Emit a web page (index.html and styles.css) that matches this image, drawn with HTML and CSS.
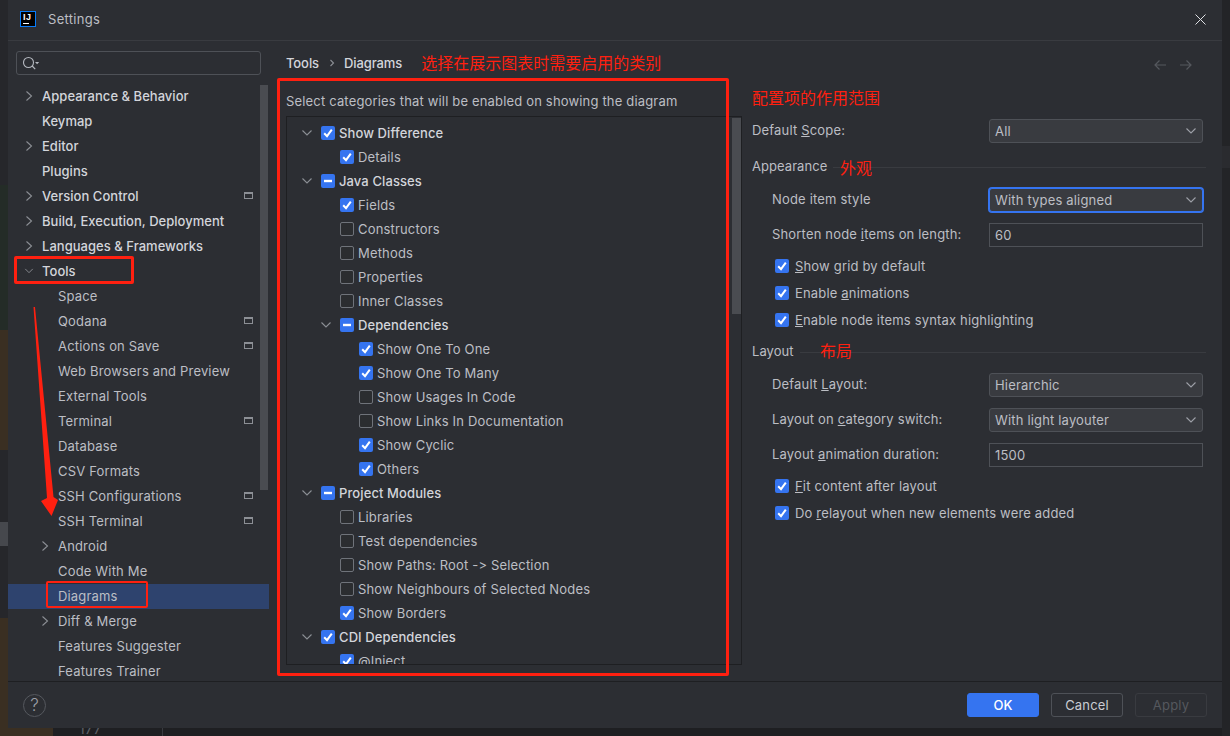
FILE: index.html
```html
<!DOCTYPE html>
<html lang="en">
<head>
<meta charset="utf-8">
<title>Settings</title>
<link rel="stylesheet" href="styles.css">
</head>
<body>
<svg class="sprite" width="0" height="0" aria-hidden="true">
  <defs>
    <symbol id="right" viewBox="0 0 10 12"><path d="M2.500 1.500 7.500 6 2.500 10.500" fill="none" stroke="currentColor" stroke-width="1.100"/></symbol>
    <symbol id="down" viewBox="0 0 12 10"><path d="M1.500 2.500 6 7 10.500 2.500" fill="none" stroke="currentColor" stroke-width="1.100"/></symbol>
    <symbol id="sep" viewBox="0 0 10 12"><path d="M3.500 3 6.500 6 3.500 9" fill="none" stroke="currentColor" stroke-width="1.100"/></symbol>
    <symbol id="check" viewBox="0 0 14 14"><path d="M3.200 7.300 6 10.200 10.800 3.600" fill="none" stroke="#fff" stroke-width="2"/></symbol>
    <symbol id="dash" viewBox="0 0 14 14"><path d="M3 7h8" fill="none" stroke="#fff" stroke-width="2.400"/></symbol>
    <symbol id="proj" viewBox="0 0 9 7"><path d="M0 0h9v7H0z" fill="#8c8f95"/><path d="M1 2h7v4H1z" fill="#2c2e33"/></symbol>
  </defs>
</svg>
<span class="gutter-number">177</span>
<div class="dialog">
  <header class="titlebar">
    <span class="logo"><span class="logo-text">IJ</span><span class="logo-bar"></span></span>
    <span class="title">Settings</span>
    <svg class="close" viewBox="0 0 11 11"><path d="M.5.5l10 10M10.500.5l-10 10" stroke="#dfe1e5" stroke-width="1" fill="none"/></svg>
  </header>
  <div class="main">
    <aside class="sidebar">
      <div class="search">
        <svg class="search-icon" viewBox="0 0 17 14"><circle cx="5.500" cy="6.500" r="5" fill="none" stroke="#b4b8bf" stroke-width="1.100"/><path d="M9.200 10 12.200 13.200" stroke="#b4b8bf" stroke-width="1.200"/><path d="M12 6h4.200L14.100 8.200z" fill="#b4b8bf"/></svg>
      </div>
      <nav class="nav">
        <div class="nav-row top"><svg class="chev"><use href="#right"/></svg><span>Appearance &amp; Behavior</span></div>
        <div class="nav-row top plain"><span>Keymap</span></div>
        <div class="nav-row top"><svg class="chev"><use href="#right"/></svg><span>Editor</span></div>
        <div class="nav-row top plain"><span>Plugins</span></div>
        <div class="nav-row top"><svg class="chev"><use href="#right"/></svg><span>Version Control</span><svg class="proj"><use href="#proj"/></svg></div>
        <div class="nav-row top"><svg class="chev"><use href="#right"/></svg><span>Build, Execution, Deployment</span></div>
        <div class="nav-row top"><svg class="chev"><use href="#right"/></svg><span>Languages &amp; Frameworks</span></div>
        <div class="nav-row top"><svg class="chev"><use href="#down"/></svg><span>Tools</span></div>
        <div class="nav-row sub plain"><span>Space</span></div>
        <div class="nav-row sub plain"><span>Qodana</span><svg class="proj"><use href="#proj"/></svg></div>
        <div class="nav-row sub plain"><span>Actions on Save</span><svg class="proj"><use href="#proj"/></svg></div>
        <div class="nav-row sub plain"><span>Web Browsers and Preview</span></div>
        <div class="nav-row sub plain"><span>External Tools</span></div>
        <div class="nav-row sub plain"><span>Terminal</span><svg class="proj"><use href="#proj"/></svg></div>
        <div class="nav-row sub plain"><span>Database</span></div>
        <div class="nav-row sub plain"><span>CSV Formats</span></div>
        <div class="nav-row sub plain"><span>SSH Configurations</span><svg class="proj"><use href="#proj"/></svg></div>
        <div class="nav-row sub plain"><span>SSH Terminal</span><svg class="proj"><use href="#proj"/></svg></div>
        <div class="nav-row sub"><svg class="chev"><use href="#right"/></svg><span>Android</span></div>
        <div class="nav-row sub plain"><span>Code With Me</span></div>
        <div class="nav-row sub plain selected"><span>Diagrams</span></div>
        <div class="nav-row sub"><svg class="chev"><use href="#right"/></svg><span>Diff &amp; Merge</span></div>
        <div class="nav-row sub plain"><span>Features Suggester</span></div>
        <div class="nav-row sub plain"><span>Features Trainer</span></div>
      </nav>
      <div class="nav-scroll"></div>
    </aside>
    <section class="content">
      <div class="crumbs">
        <span class="crumb">Tools</span>
        <svg class="crumb-sep"><use href="#sep"/></svg>
        <span class="crumb">Diagrams</span>
        <span class="note note-crumb">选择在展示图表时需要启用的类别</span>
        <span class="history">
          <svg viewBox="0 0 14 12"><path d="M13 6H2M6.500 1.500 2 6l4.500 4.500" fill="none" stroke="#55585e" stroke-width="1.200"/></svg>
          <svg viewBox="0 0 14 12"><path d="M1 6h11M7.500 1.500 12 6l-4.500 4.500" fill="none" stroke="#55585e" stroke-width="1.200"/></svg>
        </span>
      </div>
      <div class="columns">
        <div class="left">
          <p class="desc">Select categories that will be enabled on showing the diagram</p>
          <div class="tree">
            <div class="row l0 strong"><svg class="chev"><use href="#down"/></svg><span class="cb on"><svg><use href="#check"/></svg></span><span>Show Difference</span></div>
            <div class="row l1"><span class="cb on"><svg><use href="#check"/></svg></span><span>Details</span></div>
            <div class="row l0 strong"><svg class="chev"><use href="#down"/></svg><span class="cb on"><svg><use href="#dash"/></svg></span><span>Java Classes</span></div>
            <div class="row l1"><span class="cb on"><svg><use href="#check"/></svg></span><span>Fields</span></div>
            <div class="row l1"><span class="cb"></span><span>Constructors</span></div>
            <div class="row l1"><span class="cb"></span><span>Methods</span></div>
            <div class="row l1"><span class="cb"></span><span>Properties</span></div>
            <div class="row l1"><span class="cb"></span><span>Inner Classes</span></div>
            <div class="row l1-parent strong"><svg class="chev"><use href="#down"/></svg><span class="cb on"><svg><use href="#dash"/></svg></span><span>Dependencies</span></div>
            <div class="row l2"><span class="cb on"><svg><use href="#check"/></svg></span><span>Show One To One</span></div>
            <div class="row l2"><span class="cb on"><svg><use href="#check"/></svg></span><span>Show One To Many</span></div>
            <div class="row l2"><span class="cb"></span><span>Show Usages In Code</span></div>
            <div class="row l2"><span class="cb"></span><span>Show Links In Documentation</span></div>
            <div class="row l2"><span class="cb on"><svg><use href="#check"/></svg></span><span>Show Cyclic</span></div>
            <div class="row l2"><span class="cb on"><svg><use href="#check"/></svg></span><span>Others</span></div>
            <div class="row l0 strong"><svg class="chev"><use href="#down"/></svg><span class="cb on"><svg><use href="#dash"/></svg></span><span>Project Modules</span></div>
            <div class="row l1"><span class="cb"></span><span>Libraries</span></div>
            <div class="row l1"><span class="cb"></span><span>Test dependencies</span></div>
            <div class="row l1"><span class="cb"></span><span>Show Paths: Root -&gt; Selection</span></div>
            <div class="row l1"><span class="cb"></span><span>Show Neighbours of Selected Nodes</span></div>
            <div class="row l1"><span class="cb on"><svg><use href="#check"/></svg></span><span>Show Borders</span></div>
            <div class="row l0 strong"><svg class="chev"><use href="#down"/></svg><span class="cb on"><svg><use href="#check"/></svg></span><span>CDI Dependencies</span></div>
            <div class="row l1"><span class="cb on"><svg><use href="#check"/></svg></span><span>@Inject</span></div>
            <div class="tree-scroll"></div>
          </div>
        </div>
        <div class="right">
          <span class="note note-scope">配置项的作用范围</span>
          <div class="field first">
            <label>Default <u>S</u>cope:</label>
            <div class="combo"><span>All</span><svg class="chev"><use href="#down"/></svg></div>
          </div>
          <div class="heading appearance"><span>Appearance</span><i></i><span class="note note-section n-look">外观</span></div>
          <div class="group">
            <div class="field">
              <label>Node item style</label>
              <div class="combo focused"><span>With types aligned</span><svg class="chev"><use href="#down"/></svg></div>
            </div>
            <div class="field">
              <label>Shorten node <u>i</u>tems on length:</label>
              <div class="input">60</div>
            </div>
            <div class="checks">
              <div class="check"><span class="cb on"><svg><use href="#check"/></svg></span><span><u>S</u>how grid by default</span></div>
              <div class="check"><span class="cb on"><svg><use href="#check"/></svg></span><span>Enable <u>a</u>nimations</span></div>
              <div class="check"><span class="cb on"><svg><use href="#check"/></svg></span><span><u>E</u>nable node items syntax highlighting</span></div>
            </div>
          </div>
          <div class="heading layout"><span>Layout</span><i></i><span class="note note-section n-layout">布局</span></div>
          <div class="group">
            <div class="field">
              <label>Default <u>L</u>ayout:</label>
              <div class="combo"><span>Hierarchic</span><svg class="chev"><use href="#down"/></svg></div>
            </div>
            <div class="field">
              <label>Layout on <u>c</u>ategory switch:</label>
              <div class="combo"><span>With light layouter</span><svg class="chev"><use href="#down"/></svg></div>
            </div>
            <div class="field">
              <label>Layout <u>a</u>nimation duration:</label>
              <div class="input">1500</div>
            </div>
            <div class="checks">
              <div class="check"><span class="cb on"><svg><use href="#check"/></svg></span><span><u>F</u>it content after layout</span></div>
              <div class="check"><span class="cb on"><svg><use href="#check"/></svg></span><span>Do <u>r</u>elayout when new elements were added</span></div>
            </div>
          </div>
        </div>
      </div>
    </section>
  </div>
  <footer class="footer">
    <span class="help">?</span>
    <span class="buttons">
      <span class="btn primary">OK</span>
      <span class="btn">Cancel</span>
      <span class="btn disabled">Apply</span>
    </span>
  </footer>
</div>
<div class="mark mark-tools"></div>
<div class="mark mark-diagrams"></div>
<div class="mark mark-tree"></div>
<svg class="arrow" viewBox="0 0 1230 736"><path d="M33.500 307 35 307 53.500 497 58 500 51.500 516 41 501 47 498z" fill="#ff2010"/></svg>
</body>
</html>
```

FILE: styles.css
```css
* { box-sizing: border-box; }
html, body { margin: 0; height: 100%; }
body {
  position: relative;
  width: 1230px;
  height: 736px;
  overflow: hidden;
  font: 13px/20px Inter, "Noto Sans CJK SC", sans-serif;
  letter-spacing: .17px;
  color: #bcbec4;
  background-color: #1e1f22;
  background-image:
    linear-gradient(to bottom, #26272b 0 185px, #242c27 185px 330px, #3a2f22 330px 450px, #26272b 450px 522px, #46484d 522px 546px, #26272b 546px 618px, #3a2f22 618px),
    linear-gradient(to bottom, #232427 0 146px, #2a2b2f 146px 168px, #232427 168px),
    linear-gradient(to bottom, #3a2f22, #3a2f22),
    linear-gradient(to bottom, #393b40, #393b40);
  background-size: 8px 100%, 8px 100%, 53px 100%, 1px 100%;
  background-position: 0 0, 100% 0, 0 0, 162px 0;
  background-repeat: no-repeat;
}
.sprite { position: absolute; }
.gutter-number { position: absolute; left: 79px; top: 719px; color: #5c5f66; font-size: 14px; letter-spacing: .3px; }
svg { display: block; flex: none; }

.dialog {
  position: relative;
  margin-left: 8px;
  width: 1214px;
  height: 728px;
  display: flex;
  flex-direction: column;
  background: #2c2e33;
}
.titlebar {
  flex: none;
  height: 41px;
  display: flex;
  align-items: center;
  padding: 0 16px 2px 12px;
  border-bottom: 1px solid #393b40;
}
.logo {
  width: 16px;
  height: 16px;
  background: #000;
  border: 1px solid #087cfa;
  display: flex;
  flex-direction: column;
  padding: 1px 0 0 2px;
}
.logo-text { font: 700 9px/8px "Liberation Sans", sans-serif; color: #fff; letter-spacing: .4px; }
.logo-bar { width: 6px; height: 1px; background: #fff; margin-top: 2px; }
.title { margin-left: 12px; color: #bcbec4; letter-spacing: .3px; }
.close { width: 11px; height: 11px; margin-left: auto; }

.main { flex: 1; min-height: 0; display: flex; }
.sidebar { position: relative; flex: none; width: 261px; overflow: hidden; }
.search {
  margin: 10px 0 0 8px;
  width: 245px;
  height: 24px;
  border: 1px solid #4e5157;
  border-radius: 3px;
  display: flex;
  align-items: center;
  padding-left: 6px;
}
.search-icon { width: 17px; height: 14px; }
.nav { margin-top: 9px; }
.nav-row { height: 25px; display: flex; align-items: center; padding-right: 16px; padding-bottom: 2px; white-space: nowrap; color: #bcbec4; }
.nav-row .chev { width: 10px; height: 12px; margin-right: 8px; color: #8c8f95; }
.nav-row.top { padding-left: 16px; font-weight: 500; color: #d3d5db; letter-spacing: .03px; }
.nav-row.top.plain { padding-left: 34px; }
.nav-row.sub { padding-left: 32px; }
.nav-row.sub.plain { padding-left: 50px; }
.nav-row.selected { background: #2e436e; }
.proj { width: 9px; height: 7px; margin-left: auto; }
.nav-scroll { position: absolute; right: 1px; top: 44px; width: 8px; height: 405px; background: #4a4c51; }

.content { flex: 1; min-width: 0; display: flex; flex-direction: column; padding-left: 17px; }
.crumbs { flex: none; height: 43px; display: flex; align-items: center; position: relative; }
.crumb { font-weight: 500; color: #d3d5db; letter-spacing: -.1px; }
.crumb-sep { width: 10px; height: 12px; margin: 0 7px 0 8px; color: #8c8f95; }
.note { color: #ff2010; font-size: 16px; letter-spacing: 0; font-weight: 400; line-height: 20px; white-space: nowrap; }
.note-crumb { margin-left: 19px; }
.history { position: absolute; left: 867px; top: 18px; display: flex; gap: 12px; }
.history svg { width: 14px; height: 12px; }

.columns { flex: 1; min-height: 0; display: flex; }
.left { flex: none; width: 456px; display: flex; flex-direction: column; }
.desc { margin: 0; height: 32px; line-height: 34px; white-space: nowrap; }
.tree {
  position: relative;
  height: 549px;
  border: 1px solid #1e1f22;
  padding-top: 4px;
  overflow: hidden;
}
.row { height: 24px; display: flex; align-items: center; white-space: nowrap; }
.row .chev { width: 12px; height: 10px; margin-right: 8px; color: #8c8f95; }
.row .cb { margin-right: 4px; }
.row.strong { font-weight: 500; color: #d3d5db; letter-spacing: .1px; }
.row.l0 { padding-left: 14px; }
.row.l1 { padding-left: 53px; }
.row.l1-parent { padding-left: 33px; }
.row.l2 { padding-left: 72px; }
.tree-scroll { position: absolute; right: 0; top: 1px; width: 9px; height: 196px; background: #4a4c51; }

.cb {
  flex: none;
  width: 14px;
  height: 14px;
  border-radius: 2px;
  border: 1px solid #6f737a;
  background: #2b2d30;
  display: block;
}
.cb.on { border: 0; background: #3574f0; }
.cb svg { width: 14px; height: 14px; }

.right { position: relative; margin-left: 10px; width: 454px; padding-top: 35px; }
.note-scope { position: absolute; left: 0; top: 4px; }
.field { display: flex; align-items: center; height: 24px; margin-top: 11px; padding-right: 3px; }
.field.first { margin-top: 0; }
.field label { flex: none; width: 237px; padding-bottom: 2px; }
.group .field label { width: 217px; }
.group { padding-left: 20px; }
.combo, .input {
  flex: none;
  width: 214px;
  height: 24px;
  border-radius: 3px;
  border: 1px solid #4e5157;
  padding: 0 5px;
  display: flex;
  align-items: center;
  justify-content: space-between;
  color: #bcbec4;
}
.combo { background: #393b40; }
.input { border-radius: 0; background: #2c2e33; }
.combo .chev { width: 12px; height: 10px; color: #9da0a8; }
.combo.focused { border-color: #3574f0; box-shadow: 0 0 0 1px #3574f0; }
.heading { position: relative; display: flex; align-items: center; height: 20px; margin-top: 14px; letter-spacing: .05px; }
.heading.layout { margin-top: 12px; }
.heading > span:first-child { padding-bottom: 2px; }
.heading i { flex: 1; height: 1px; background: #393b40; margin-left: 6px; }
.note-section { position: absolute; top: 0; }
.n-look { left: 88px; top: 1px; }
.n-layout { left: 68px; top: -1px; }
.checks { margin-top: 9px; padding-left: 3px; display: flex; flex-direction: column; gap: 7px; }
.check { height: 20px; display: flex; align-items: center; gap: 6px; }

.footer {
  flex: none;
  height: 47px;
  border-top: 1px solid #1e1f22;
  display: flex;
  align-items: center;
  justify-content: space-between;
  padding: 0 15px;
}
.help {
  width: 23px;
  height: 23px;
  border-radius: 50%;
  border: 1px solid #55585e;
  display: flex;
  align-items: center;
  justify-content: center;
  font-size: 17px;
  font-weight: 300;
  letter-spacing: 0;
  color: #9da0a8;
}
.buttons { display: flex; gap: 12px; }
.btn {
  width: 72px;
  height: 24px;
  display: flex;
  align-items: center;
  justify-content: center;
  border: 1px solid #4e5157;
  border-radius: 3px;
  color: #c9ccd2;
}
.btn.primary { background: #3574f0; border-color: #3574f0; color: #fff; font-weight: 500; }
.btn.disabled { border-color: #393b40; color: #55585e; }

.mark { position: absolute; border: 3px solid #ff2010; border-radius: 2px; }
.mark-tools { left: 14px; top: 256px; width: 120px; height: 28px; }
.mark-diagrams { left: 46px; top: 581px; width: 102px; height: 27px; border-width: 2px; }
.mark-tree { left: 277px; top: 78px; width: 452px; height: 598px; }
.arrow { position: absolute; left: 0; top: 0; width: 1230px; height: 736px; pointer-events: none; }
```
